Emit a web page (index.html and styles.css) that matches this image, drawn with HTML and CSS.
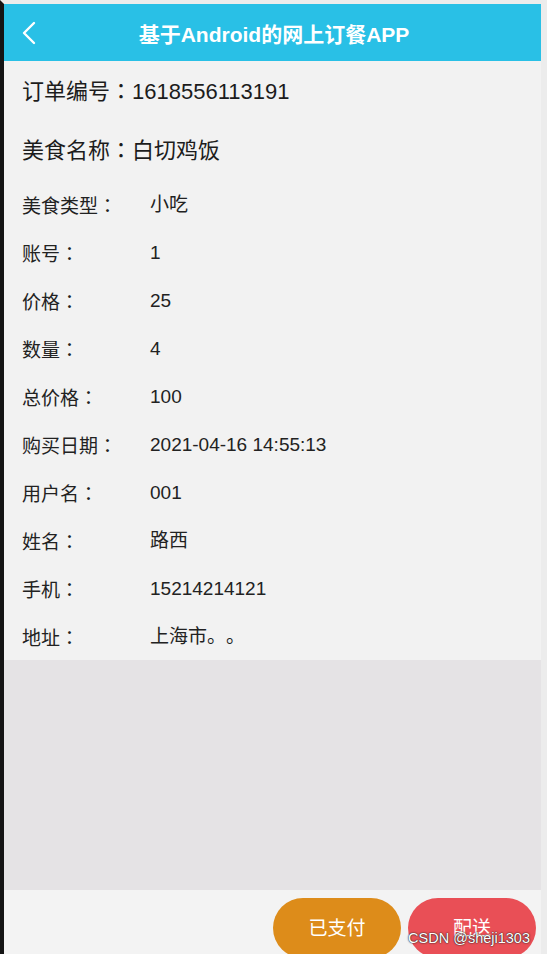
FILE: index.html
```html
<!DOCTYPE html>
<html lang="zh-CN">
<head>
<meta charset="utf-8">
<title>订单详情</title>
<link rel="stylesheet" href="styles.css">
</head>
<body>
<div class="frame">
  <div class="app">
    <header class="topbar">
      <span class="back">
        <svg width="16" height="24" viewBox="0 0 16 24"><path d="M13 2 L3 12 L13 22" fill="none" stroke="#fff" stroke-width="2.4" stroke-linecap="round" stroke-linejoin="round"/></svg>
      </span>
      <h1 class="title">基于Android的网上订餐APP</h1>
    </header>
    <section class="detail">
      <div class="big">订单编号<span class="p" lang="zh-TW">：</span>1618556113191</div>
      <div class="big">美食名称<span class="p" lang="zh-TW">：</span>白切鸡饭</div>
      <div class="row"><span class="k">美食类型<span class="p" lang="zh-TW">：</span></span><span class="v">小吃</span></div>
      <div class="row"><span class="k">账号<span class="p" lang="zh-TW">：</span></span><span class="v">1</span></div>
      <div class="row"><span class="k">价格<span class="p" lang="zh-TW">：</span></span><span class="v">25</span></div>
      <div class="row"><span class="k">数量<span class="p" lang="zh-TW">：</span></span><span class="v">4</span></div>
      <div class="row"><span class="k">总价格<span class="p" lang="zh-TW">：</span></span><span class="v">100</span></div>
      <div class="row"><span class="k">购买日期<span class="p" lang="zh-TW">：</span></span><span class="v">2021-04-16 14:55:13</span></div>
      <div class="row"><span class="k">用户名<span class="p" lang="zh-TW">：</span></span><span class="v">001</span></div>
      <div class="row"><span class="k">姓名<span class="p" lang="zh-TW">：</span></span><span class="v">路西</span></div>
      <div class="row"><span class="k">手机<span class="p" lang="zh-TW">：</span></span><span class="v">15214214121</span></div>
      <div class="row"><span class="k">地址<span class="p" lang="zh-TW">：</span></span><span class="v">上海市。。</span></div>
    </section>
    <div class="filler"></div>
    <footer class="actions">
      <button class="btn paid">已支付</button>
      <button class="btn ship">配送</button>
      <span class="watermark">CSDN @sheji1303</span>
    </footer>
  </div>
</div>
</body>
</html>
```
FILE: styles.css
```css
html, body {
  margin: 0;
  padding: 0;
  height: 100%;
  overflow: hidden;
}
body {
  background: #111;
  font-family: "Liberation Sans", "Noto Sans CJK SC", sans-serif;
  text-spacing-trim: space-all;
}
.frame {
  width: 547px;
  height: 954px;
  box-sizing: border-box;
  border-left: 4px solid #141414;
  border-top: 4px solid #ececec;
  border-right: 6px solid #ececec;
  background: #f2f2f2;
}
.app {
  height: 100%;
  display: flex;
  flex-direction: column;
  position: relative;
}
.topbar {
  height: 57px;
  background: #29c0e6;
  display: flex;
  align-items: center;
  justify-content: center;
  position: relative;
  flex: none;
}
.back {
  position: absolute;
  left: 17px;
  top: 17px;
  display: flex;
}
.title {
  margin: 0 0 0 3px;
  color: #fff;
  font-size: 21px;
  font-weight: bold;
  font-family: "Liberation Sans", "Noto Sans CJK SC", sans-serif;
}
.p {
  font-family: "Noto Sans CJK TC", sans-serif;
  font-feature-settings: "locl" 0;
}
.detail {
  background: #f2f2f2;
  padding: 13px 0 0 18px;
  height: 599px;
  box-sizing: border-box;
  flex: none;
  color: #1c1c1c;
}
.big {
  font-size: 22px;
  line-height: 30px;
  height: 30px;
  margin-bottom: 29px;
}
.row {
  display: flex;
  font-size: 19px;
  line-height: 26px;
  height: 48px;
  color: #222;
}
.k {
  width: 128px;
  flex: none;
}
.v {
  text-spacing-trim: space-all;
}
.filler {
  height: 230px;
  background: #e5e3e5;
  flex: none;
}
.actions {
  flex: 1;
  background: #f3f3f3;
  display: flex;
  justify-content: flex-end;
  align-items: flex-start;
  padding: 8px 5px 0 0;
  gap: 7px;
  position: relative;
}
.btn {
  width: 128px;
  height: 60px;
  border: none;
  border-radius: 30px;
  color: #fff;
  font-size: 19px;
  font-family: "Liberation Sans", "Noto Sans CJK SC", sans-serif;
  padding: 0 0 4px;
}
.paid {
  background: #dd8c1a;
}
.ship {
  background: #e94f56;
}
.watermark {
  position: absolute;
  right: 11px;
  top: 40px;
  color: #fff;
  font-size: 14.5px;
  font-family: "Liberation Sans", sans-serif;
  text-shadow: 0 0 2px #333, 0 0 1px #000;
}
```
